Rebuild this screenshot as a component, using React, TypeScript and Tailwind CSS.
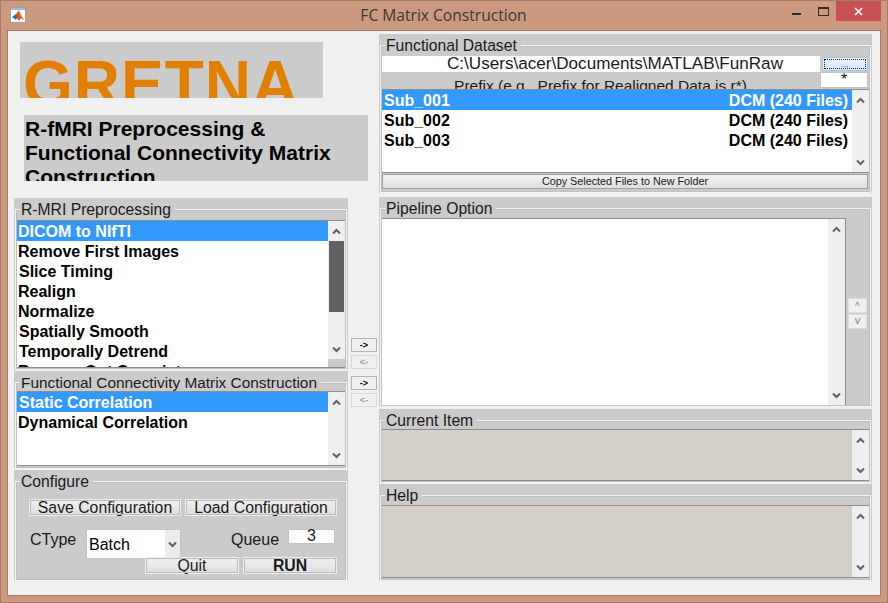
import React from "react";

const sans = "font-['Liberation_Sans',Arial,sans-serif]";

function Up() {
  return (
    <svg width="9" height="7" viewBox="0 0 9 7">
      <path d="M1 5.5 L4.5 2 L8 5.5" fill="none" stroke="#606060" strokeWidth="2" />
    </svg>
  );
}
function Down() {
  return (
    <svg width="9" height="7" viewBox="0 0 9 7">
      <path d="M1 1.5 L4.5 5 L8 1.5" fill="none" stroke="#606060" strokeWidth="2" />
    </svg>
  );
}

function ScrollBar({ thumb, tail }: { thumb?: boolean; tail?: boolean }) {
  return (
    <div className="flex w-[17px] shrink-0 flex-col self-stretch bg-[#efefef]">
      <div className="flex h-5 shrink-0 items-center justify-center">
        <Up />
      </div>
      {thumb ? <div className="h-[71px] w-[15px] self-center bg-[#606060]" /> : null}
      <div className="flex-1" />
      <div className="flex h-[20px] shrink-0 items-center justify-center">
        <Down />
      </div>
      {tail ? <div className="h-[8px] shrink-0 bg-[#c8c8c8]" /> : null}
    </div>
  );
}

function Panel({
  title,
  className,
  children,
  size = "text-[15.7px]",
}: {
  title: string;
  className: string;
  children: React.ReactNode;
  size?: string;
}) {
  return (
    <div className={`relative flex shrink-0 flex-col bg-[#cbcbcb] ${className}`}>
      <div className="h-[11px] shrink-0" />
      <div className="mx-px flex min-h-0 flex-1 flex-col border border-[#f2f2f2] outline outline-1 -outline-offset-2 outline-[#c0c0c0]">
        {children}
      </div>
      <div
        className={`absolute left-[6px] top-[3px] h-[17px] whitespace-nowrap bg-[#cbcbcb] pl-px pr-[4px] leading-[17px] text-[#1a1a1a] ${size}`}
      >
        {title}
      </div>
    </div>
  );
}

function Row({ text, active, right, indent }: { text: string; active?: boolean; right?: string; indent: string }) {
  return (
    <div
      className={`flex h-5 shrink-0 justify-between whitespace-nowrap pr-[4px] pt-px text-[16px] font-bold leading-5 ${indent} ${
        active ? "bg-[#3399ff] text-white" : "text-black"
      }`}
    >
      <span>{text}</span>
      {right ? <span>{right}</span> : null}
    </div>
  );
}

function Btn({ className, children, bold }: { className: string; children: React.ReactNode; bold?: boolean }) {
  return (
    <div
      className={`flex items-center justify-center border border-[#ececec] bg-[linear-gradient(#f0f0f0,#dedede)] text-[15.8px] leading-none text-[#1a1a1a] outline outline-1 -outline-offset-2 outline-[#bcbcbc] ${
        bold ? "font-bold" : ""
      } ${className}`}
    >
      {children}
    </div>
  );
}

function Arrow({ dir, enabled }: { dir: string; enabled?: boolean }) {
  return (
    <div
      className={`flex h-[14px] w-[26px] items-center justify-center border text-[9px] font-bold leading-none ${
        enabled ? "border-[#b4b4b4] bg-[#f0f0f0] text-black" : "border-[#d8d8d8] bg-[#f0f0f0] text-[#9a9a9a]"
      }`}
    >
      {dir}
    </div>
  );
}

function MiniBtn({ children }: { children: React.ReactNode }) {
  return (
    <div className="flex h-[15px] w-[19px] items-center justify-center border border-[#dedede] bg-[#efefef] text-[9px] font-bold leading-none text-[#8a9ab0]">
      {children}
    </div>
  );
}

export default function App() {
  return (
    <div className={`flex h-[603px] w-[888px] flex-col overflow-hidden border border-[#a67c62] bg-[#cb997d] ${sans}`}>
      {/* Title bar */}
      <div className="flex h-[29px] shrink-0 items-start pl-[9px]">
        <div className="mt-[6px] flex h-[16px] w-[16px] flex-col border border-[#a0a0a0] bg-white">
          <div className="h-[2px] bg-[#9fb8d8]" />
          <svg width="14" height="12" viewBox="0 0 14 12">
            <path d="M1 7 L5 4 L7 6 L5 10 Z" fill="#2a6fb0" />
            <path d="M5 4 L8 0.5 L11 7 L13.5 10.5 L10 8 L8 11 L5.5 7 Z" fill="#d9541e" />
            <path d="M8 0.5 L11 7 L9 6.5 Z" fill="#f0a020" />
          </svg>
        </div>
        <div className="ml-[69px] mt-[4px] flex-1 text-center font-['Open_Sans',sans-serif] text-[15.6px] leading-[20px] text-[#3a3a3a]">
          FC Matrix Construction
        </div>
        <div className="flex items-start">
          <svg width="9" height="3" viewBox="0 0 9 3" className="mr-[17px] mt-[12px]">
            <rect width="9" height="2" fill="#2c2c2c" />
          </svg>
          <svg width="11" height="9" viewBox="0 0 11 9" className="mr-[7px] mt-[6px]">
            <rect x=".5" y=".5" width="10" height="8" fill="none" stroke="#2c2c2c" />
            <rect width="11" height="2" fill="#2c2c2c" />
          </svg>
          <div className="mr-[6px] flex h-[20px] w-[45px] items-center justify-center bg-[#c75050]">
            <svg width="9" height="9" viewBox="0 0 9 9">
              <path d="M1 1 L8 8 M8 1 L1 8" stroke="white" strokeWidth="1.6" />
            </svg>
          </div>
        </div>
      </div>

      {/* Client */}
      <div className="mx-[6px] flex h-[566px] border border-[#a67c62] bg-[#f0f0f0]">
        {/* Left */}
        <div className="flex w-[371px] shrink-0 flex-col">
          <div className="ml-[12px] mt-[11px] h-[56px] w-[303px] overflow-hidden bg-[#cbcbcb]">
            <div className="ml-[3px] mt-[10px] whitespace-nowrap text-[64px] font-bold leading-[64px] tracking-[1px] text-[#e17f00]">
              GRETNA
            </div>
          </div>
          <div className="ml-[16px] mt-[17px] h-[66px] w-[344px] overflow-hidden bg-[#cbcbcb] pl-[1px] pt-[2px] text-[21px] font-bold leading-[24px] text-black">
            R-fMRI Preprocessing &amp;
            <br />
            Functional Connectivity Matrix
            <br />
            Construction
          </div>

          <div className="ml-[6px] mt-[17px] flex w-[334px] flex-col gap-[1px]">
            <Panel title="R-MRI Preprocessing" className="h-[172px]">
              <div className="mt-[10px] flex h-[148px] overflow-hidden border border-[#8c8c8c] bg-white">
                <div className="min-w-0 flex-1 overflow-hidden">
                  <Row text="DICOM to NIfTI" active indent="pl-[1px]" />
                  <Row text="Remove First Images" indent="pl-[1px]" />
                  <Row text="Slice Timing" indent="pl-[2px]" />
                  <Row text="Realign" indent="pl-[1px]" />
                  <Row text="Normalize" indent="pl-[1px]" />
                  <Row text="Spatially Smooth" indent="pl-[2px]" />
                  <Row text="Temporally Detrend" indent="pl-[2px]" />
                  <Row text="Remove Out Covariates" indent="pl-[1px]" />
                </div>
                <ScrollBar thumb tail />
              </div>
            </Panel>

            <Panel title="Functional Connectivity Matrix Construction" className="h-[98px]" size="text-[15.4px]">
              <div className="mt-[8px] flex h-[75px] shrink-0 overflow-hidden border border-[#8c8c8c] bg-white">
                <div className="min-w-0 flex-1 overflow-hidden">
                  <Row text="Static Correlation" active indent="pl-[2px]" />
                  <Row text="Dynamical Correlation" indent="pl-[1px]" />
                </div>
                <ScrollBar />
              </div>
            </Panel>

            <Panel title="Configure" className="h-[111px]">
              <div className="flex flex-col pl-[13px] pr-[9px]">
                <div className="mt-[17px] flex gap-[4px]">
                  <Btn className="h-[17px] w-[152px]">Save Configuration</Btn>
                  <Btn className="h-[17px] w-[152px]">Load Configuration</Btn>
                </div>
                <div className="mt-[13px] flex h-[30px] items-start pl-px">
                  <span className="mt-[1px] w-[56px] text-[16px] leading-[20px] text-[#1a1a1a]">CType</span>
                  <div className="flex h-[30px] w-[95px] items-center border border-[#c4c4c4] bg-white pl-[2px] text-[16px] leading-none text-black">
                    <span className="flex-1 pt-[1px]">Batch</span>
                    <div className="flex h-full w-[15px] items-center justify-center bg-[#ececec]">
                      <Down />
                    </div>
                  </div>
                  <span className="ml-[50px] mt-[1px] w-[57px] text-[16px] leading-[20px] text-[#1a1a1a]">Queue</span>
                  <div className="flex h-[15px] w-[47px] items-center justify-center border border-[#c4c4c4] bg-white pb-[1px] text-[16px] leading-none text-[#1a1a1a]">
                    3
                  </div>
                </div>
                <div className="-mt-[2px] flex justify-end gap-[4px]">
                  <Btn className="z-10 h-[17px] w-[94px]">Quit</Btn>
                  <Btn className="z-10 h-[17px] w-[94px]" bold>
                    RUN
                  </Btn>
                </div>
              </div>
            </Panel>
          </div>
        </div>

        {/* Middle arrows: sit over the gutter between the columns */}
        <div className="flex w-0 shrink-0 flex-col">
          <div className="-ml-[28px] mt-[307px] flex flex-col gap-[3px]">
            <Arrow dir="->" enabled />
            <Arrow dir="<-" />
          </div>
          <div className="-ml-[28px] mt-[7px] flex flex-col gap-[3px]">
            <Arrow dir="->" enabled />
            <Arrow dir="<-" />
          </div>
        </div>

        {/* Right */}
        <div className="flex w-[493px] shrink-0 flex-col pt-[3px]">
          <Panel title="Functional Dataset" className="h-[159px] w-[493px]">
            <div className="mt-[10px] flex h-[16px]">
              <div className="flex h-[16px] w-[439px] items-center justify-center whitespace-nowrap bg-white pl-[29px] text-[17.1px] leading-none text-[#1a1a1a]">
                C:\Users\acer\Documents\MATLAB\FunRaw
              </div>
              <div className="ml-[2px] mt-px h-[14px] w-[46px] border border-[#a0c8f0] bg-[linear-gradient(#eaf4fd,#d8e8f6)] p-px">
                <div className="flex h-full w-full items-end justify-center border border-dotted border-[#222] text-[8px] leading-[6px] text-[#222]">
                  ...
                </div>
              </div>
            </div>
            <div className="flex h-[17px]">
              <div className="h-[17px] w-[439px] overflow-hidden whitespace-nowrap text-center text-[15.5px] leading-[28px] text-[#1a1a1a]">
                Prefix (e.g., Prefix for Realigned Data is r*)
              </div>
              <div className="h-[16px] w-[48px] border border-[#c4c4c4] bg-white text-center text-[16px] leading-[14px] text-[#1a1a1a]">
                *
              </div>
            </div>
            <div className="flex h-[84px] overflow-hidden border border-[#8c8c8c] bg-white">
              <div className="min-w-0 flex-1 overflow-hidden">
                <Row text="Sub_001" right="DCM (240 Files)" active indent="pl-[2px]" />
                <Row text="Sub_002" right="DCM (240 Files)" indent="pl-[2px]" />
                <Row text="Sub_003" right="DCM (240 Files)" indent="pl-[2px]" />
              </div>
              <ScrollBar />
            </div>
            <div className="ml-px mt-px flex h-[15px] w-[486px] items-center justify-center border border-[#a0a0a0] bg-[linear-gradient(#f2f2f2,#dedede)] text-[10.8px] leading-none text-[#1a1a1a]">
              Copy Selected Files to New Folder
            </div>
          </Panel>

          <Panel title="Pipeline Option" className="mt-[4px] h-[210px] w-[493px]">
            <div className="flex">
              <div className="mt-[9px] flex h-[188px] w-[465px] overflow-hidden border border-[#8c8c8c] bg-white">
                <div className="flex-1" />
                <ScrollBar />
              </div>
              <div className="ml-[2px] mt-[89px] flex flex-col gap-[1px]">
                <MiniBtn>^</MiniBtn>
                <MiniBtn>V</MiniBtn>
              </div>
            </div>
          </Panel>

          <Panel title="Current Item" className="mt-[2px] h-[74px] w-[493px]">
            <div className="mt-[8px] flex h-[52px] overflow-hidden border border-[#8c8c8c] bg-[#d4d0c8]">
              <div className="flex-1" />
              <ScrollBar />
            </div>
          </Panel>

          <Panel title="Help" className="mt-[1px] h-[97px] w-[493px]">
            <div className="mt-[9px] flex h-[73px] overflow-hidden border border-[#8c8c8c] bg-[#d4d0c8]">
              <div className="flex-1" />
              <ScrollBar />
            </div>
          </Panel>
        </div>
      </div>
    </div>
  );
}
